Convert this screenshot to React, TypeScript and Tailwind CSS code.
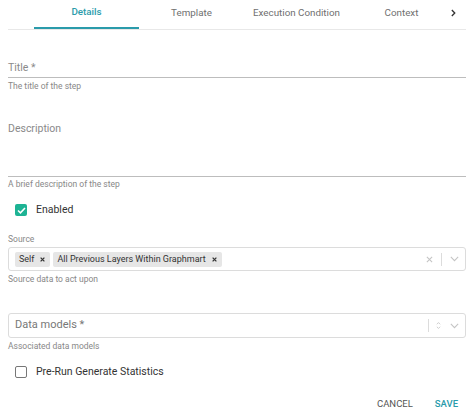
import { memo } from "react";

const tabs = ["Details", "Template", "Execution Condition", "Context"];

const Chip = ({ label }: { label: string }) => (
    <span className="flex h-[15px] items-center gap-[6px] rounded-[2px] bg-[#e6e6e6] pl-[4px] pr-[5px] text-[9px] leading-[15px] text-[#333]">
        {label}
        <svg width="5" height="5" viewBox="0 0 8 8">
            <path d="M1 1L7 7M7 1L1 7" stroke="#333" strokeWidth="2" />
        </svg>
    </span>
);

const Chevron = () => (
    <svg width="9" height="6" viewBox="0 0 11 7">
        <path d="M1 1L5.5 5.5L10 1" fill="none" stroke="#c4c4c4" strokeWidth="1.3" />
    </svg>
);

const Checkbox = ({ checked }: { checked?: boolean }) =>
    checked ? (
        <span className="flex h-[12px] w-[12px] items-center justify-center rounded-[2px] bg-[#1db394]">
            <svg width="9" height="7" viewBox="0 0 10 8">
                <path d="M1 4L3.8 6.6L9 1.2" fill="none" stroke="white" strokeWidth="1.8" />
            </svg>
        </span>
    ) : (
        <span className="h-[12px] w-[12px] rounded-[2px] border-[1.5px] border-[#777]" />
    );

const App = memo(() => {
    return (
        <div className="h-[415px] w-[474px] overflow-hidden bg-white px-2 font-['Roboto',sans-serif]">
            {/* Tab header */}
            <div className="flex h-[30px] items-stretch border-b border-[#e8e8e8]">
                <div className="w-[26px] shrink-0" />
                {tabs.map((t, i) => (
                    <div
                        key={t}
                        className={`flex w-[105px] shrink-0 items-center justify-center whitespace-nowrap pb-[3px] text-[9.8px] ${
                            i === 0
                                ? "border-b-2 border-[#2a9bab] font-medium text-[#2a9bab]"
                                : "text-[#707070]"
                        }`}
                    >
                        {t}
                    </div>
                ))}
                <div className="-ml-[9px] flex w-[16px] shrink-0 items-center justify-center pb-[3px]">
                    <svg width="5" height="8" viewBox="0 0 6 9">
                        <path d="M1 1L4.5 4.5L1 8" fill="none" stroke="#333" strokeWidth="1.6" />
                    </svg>
                </div>
            </div>

            {/* Title */}
            <div className="mt-[30px] h-[18px] border-b border-[#bdbdbd] pt-[1px] text-[10.5px] leading-[14px] text-[#8a8a8a]">
                Title *
            </div>
            <div className="mt-[3px] text-[8.5px] leading-[10px] text-[#888]">The title of the step</div>

            {/* Description */}
            <div className="mt-[31px] h-[55px] border-b border-[#bdbdbd] text-[10.5px] leading-[14px] text-[#8a8a8a]">
                Description
            </div>
            <div className="mt-[2px] text-[8.5px] leading-[10px] text-[#888]">
                A brief description of the step
            </div>

            {/* Enabled */}
            <div className="mt-[14px] flex h-[14px] items-center gap-[9px] pl-[7px] text-[10.5px] text-[#333]">
                <Checkbox checked />
                Enabled
            </div>

            {/* Source */}
            <div className="mt-[17px] text-[8.5px] leading-[10px] text-[#888]">Source</div>
            <div className="mt-[3px] flex h-[24px] items-center rounded-[3px] border border-[#dcdcdc] pl-[6px] pr-[6px]">
                <div className="flex flex-1 items-center gap-[3px]">
                    <Chip label="Self" />
                    <Chip label="All Previous Layers Within Graphmart" />
                </div>
                <svg width="7" height="7" viewBox="0 0 8 8">
                    <path d="M1 1L7 7M7 1L1 7" stroke="#c4c4c4" strokeWidth="1.2" />
                </svg>
                <span className="mx-[8px] h-[13px] w-px bg-[#dcdcdc]" />
                <Chevron />
            </div>
            <div className="mt-[3px] text-[8.5px] leading-[10px] text-[#888]">Source data to act upon</div>

            {/* Data models */}
            <div className="mt-[29px] flex h-[25px] items-center rounded-[3px] border border-[#dcdcdc] pl-[6px] pr-[6px]">
                <span className="flex-1 text-[11px] text-[#777]">Data models *</span>
                <span className="mr-[7px] h-[13px] w-px bg-[#dcdcdc]" />
                <svg width="5" height="9" viewBox="0 0 6 10">
                    <path d="M1 3.5L3 1.5L5 3.5M1 6.5L3 8.5L5 6.5" fill="none" stroke="#c4c4c4" strokeWidth="1" />
                </svg>
                <span className="w-[9px]" />
                <Chevron />
            </div>
            <div className="mt-[3px] text-[8.5px] leading-[10px] text-[#888]">Associated data models</div>

            {/* Pre-Run */}
            <div className="mt-[14px] flex h-[14px] items-center gap-[9px] pl-[7px] text-[10.5px] text-[#333]">
                <Checkbox />
                Pre-Run Generate Statistics
            </div>

            {/* Actions */}
            <div className="mt-[19px] flex justify-end gap-[22px] pr-[8px] text-[9.5px] leading-[12px]">
                <span className="text-[#555]">CANCEL</span>
                <span className="font-medium text-[#2a9bab]">SAVE</span>
            </div>
        </div>
    );
});

App.displayName = "App";

export default App;
